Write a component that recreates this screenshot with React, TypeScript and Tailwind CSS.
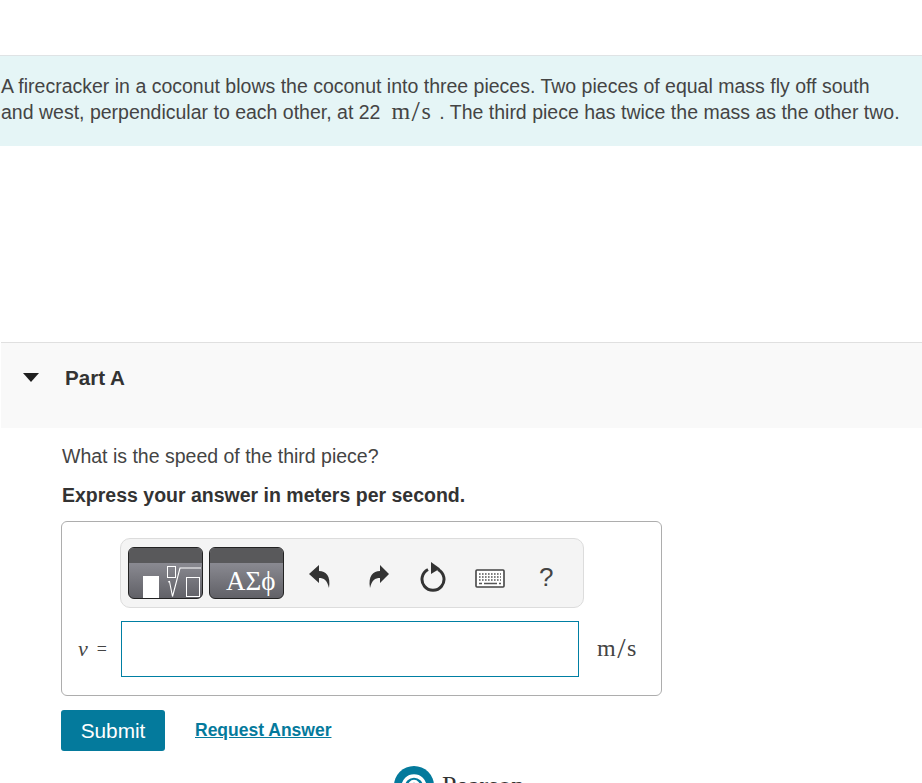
const SANS = "font-['Liberation_Sans',Arial,sans-serif]";
const SERIF = "font-['Liberation_Serif','DejaVu_Serif',serif]";

function Units() {
  return (
    <span className={`inline-flex items-center text-[24px] leading-[24px] tracking-[1.5px] text-[#444] ${SERIF}`}>
      m<span className="text-[30px] leading-[24px] font-normal">/</span>s
    </span>
  );
}

function TemplateButton({ children }: { children: React.ReactNode }) {
  return (
    <div className="relative w-[75px] h-[52px] rounded-[6px] border border-[#222] overflow-hidden bg-gradient-to-b from-[#9c9ca4] to-[#616167]">
      <div className="h-[15px] bg-[#59595b]" />
      {children}
    </div>
  );
}

function Toolbar() {
  return (
    <div className="relative ml-[58px] w-[464px] h-[70px] rounded-[10px] border border-[#dcdcdc] bg-[#f4f4f4] flex items-center pl-[7px]">
      <div className="flex gap-[6px]">
        <TemplateButton>
          <svg className="absolute -left-px -top-px" width="75" height="52" viewBox="0 0 75 52" fill="none">
            <rect x="15" y="29" width="16" height="23" fill="#fff" />
            <rect x="39.5" y="19.5" width="8" height="11" stroke="#fff" strokeWidth="1" />
            <path d="M40 35l1.5 -.5 3 15 7.5 -28.500h21" stroke="#fff" strokeWidth="1.1" />
            <rect x="58.500" y="30.500" width="13" height="19" stroke="#fff" strokeWidth="1" />
          </svg>
        </TemplateButton>
        <TemplateButton>
          <span className={`absolute left-[16px] top-[15px] text-[27px] leading-[36px] text-white whitespace-nowrap ${SERIF}`}>ΑΣϕ</span>
        </TemplateButton>
      </div>
      <svg className="ml-[25px] mt-[8px]" width="22" height="24" viewBox="0 0 22 24" fill="#333">
        <path d="M0 9 L10 0 V6 C17 6 22 11 20 23 C18 15 15 13 10 13 V18 Z" />
      </svg>
      <svg className="ml-[37px] mt-[8px]" width="22" height="24" viewBox="0 0 22 24" fill="#333">
        <path d="M21 9 L12 0 V6 C5 6 0 11 2 23 C4 15 7 13 12 13 V18 Z" />
      </svg>
      <svg className="ml-[30px] mt-[8px]" width="26" height="30" viewBox="0 0 26 30" fill="none">
        <path d="M8 7.500 A11 11 0 1 0 18 7.500" stroke="#333" strokeWidth="3" />
        <path d="M11 0 L20 6.500 L11 12 Z" fill="#333" />
      </svg>
      <svg className="ml-[29px] mt-[10px]" width="30" height="19" viewBox="0 0 30 19" fill="none">
        <rect x="1" y="1" width="28" height="17" rx="1" fill="#fff" stroke="#444" strokeWidth="1.6" />
        <path d="M4 5h22M4 8h22M4 11h22" stroke="#555" strokeWidth="1.6" strokeDasharray="1.6 1.4" />
        <path d="M4 14.500h3M9 14.500h13M24 14.500h2" stroke="#555" strokeWidth="1.6" />
      </svg>
      <span className={`ml-[34px] mt-[8px] text-[26px] leading-none text-[#444] ${SANS}`}>?</span>
    </div>
  );
}

export default function App() {
  return (
    <div className={`relative h-[783px] w-[922px] overflow-hidden bg-white text-[#333] ${SANS}`}>
      <div className="h-[55px]" />
      <div className="h-[91px] border-t border-[#dfe3e5] bg-[#e5f5f6] pt-[18px] pl-[1px] text-[19.5px] leading-[25px] text-[#444]">
        <p className="whitespace-nowrap">A firecracker in a coconut blows the coconut into three pieces. Two pieces of equal mass fly off south</p>
        <p className="whitespace-nowrap">
          and west, perpendicular to each other, at 22
          <span className="ml-[11px] mr-[7px]"><Units /></span>. The third piece has twice the mass as the other two.
        </p>
      </div>

      <div className="h-[196px]" />

      <div className="ml-[1px] h-[86px] border-t border-[#e0e0e0] bg-[#f9f9f9] flex items-center pl-[22px] pb-[16px]">
        <svg width="16" height="9" viewBox="0 0 16 9" fill="#1f1f1f"><path d="M0 0H16L8 9Z" /></svg>
        <span className="ml-[26px] mt-[2px] text-[20.6px] font-bold text-[#333]">Part A</span>
      </div>

      <div className="pl-[62px]">
        <p className="mt-[15px] text-[19.5px] leading-[27px] text-[#444]">What is the speed of the third piece?</p>
        <p className="mt-[12px] text-[19.5px] leading-[27px] font-bold text-[#333]">Express your answer in meters per second.</p>
      </div>

      <div className="ml-[61px] mt-[12px] w-[601px] h-[175px] rounded-[6px] border border-[#adadad] pt-[16px]">
        <Toolbar />
        <div className="mt-[13px] flex items-center">
          <span className={`w-[59px] pl-[16px] flex items-center gap-[9px] text-[#444] whitespace-nowrap ${SERIF}`}>
            <i className="text-[22px] leading-[24px]">v</i><span className="text-[18px]">=</span>
          </span>
          <div className="w-[458px] h-[56px] border border-[#007fa3] bg-white" />
          <span className="ml-[18px] mt-[1px]"><Units /></span>
        </div>
      </div>

      <div className="ml-[61px] mt-[14px] flex items-start">
        <button className="w-[104px] h-[41px] rounded-[3px] bg-[#047a9c] text-[20.8px] text-white">Submit</button>
        <a className="ml-[30px] mt-[7px] text-[17.5px] leading-[27px] font-bold text-[#047a9c] underline">Request Answer</a>
      </div>

      <div className="absolute left-[394px] top-[766px] flex items-start">
        <svg width="40" height="40" viewBox="0 0 40 40" fill="none">
          <circle cx="20" cy="20" r="20" fill="#047a9c" />
          <path d="M9 22 C9 6 31 6 31 22" stroke="#fff" strokeWidth="3.500" />
          <path d="M15 22 C15 13 25 13 25 22" stroke="#fff" strokeWidth="3" />
        </svg>
        <span className={`ml-[8px] mt-[5px] text-[26px] leading-[30px] text-[#333] ${SERIF}`}>Pearson</span>
      </div>
    </div>
  );
}
